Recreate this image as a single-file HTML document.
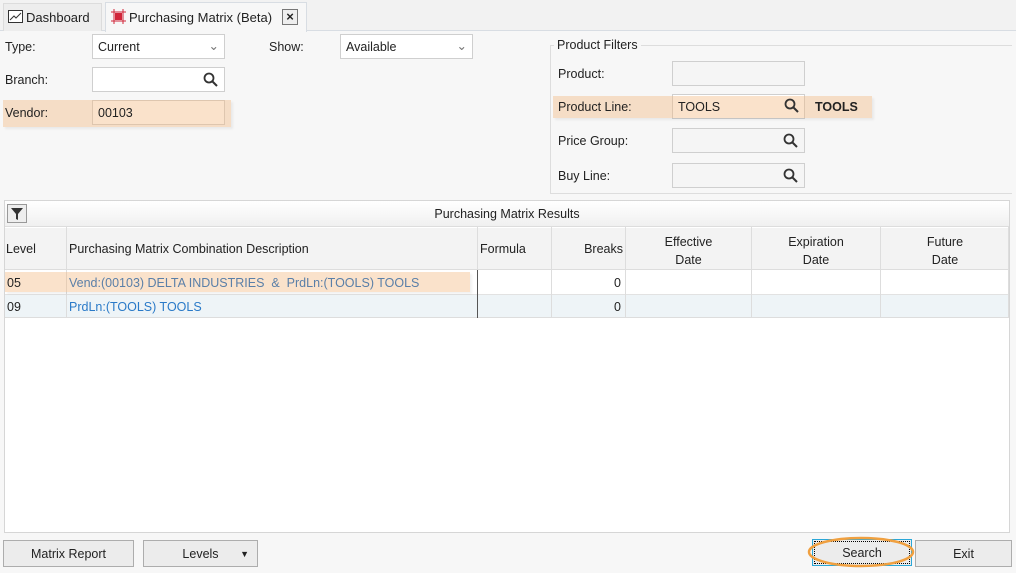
<!DOCTYPE html>
<html><head><style>
*{box-sizing:border-box;margin:0;padding:0}
body{width:1016px;height:573px;background:#f7f7f7;font-family:"Liberation Sans",sans-serif;font-size:12.5px;color:#222;position:relative;overflow:hidden}
.a{position:absolute}
.inp{position:absolute;background:#fff;border:1px solid #cfcfcf;height:25px;padding:5px 5px}
.hl{position:absolute;background:rgba(244,185,130,.42);box-shadow:2px 2px 2px rgba(0,0,0,.06)}
.mag{position:absolute;right:6px;top:4px}
.lbl{position:absolute}
.btn{position:absolute;border:1px solid #adadad;background:#ececec;text-align:center;line-height:26px;height:27px}
.col{position:absolute;top:227px;height:91px;border-left:1px solid #ddd}
</style></head><body>
<div class="a" style="left:0;top:0;width:1016px;height:31px;background:#f2f2f2;border-bottom:1px solid #d8dde3"></div>
<div class="a" style="left:3px;top:3px;width:99px;height:28px;background:#ededed;border:1px solid #dcdcdc;border-bottom:none"></div>
<svg class="a" style="left:8px;top:10px" width="15" height="13"><rect x=".5" y=".5" width="14" height="12" fill="#fff" stroke="#333"/><path d="M2 10l4-4 2 2 5-5" stroke="#333" fill="none"/></svg>
<div class="a" style="left:26px;top:10px;font-size:13px">Dashboard</div>
<div class="a" style="left:105px;top:2px;width:202px;height:30px;background:#f7f7f7;border:1px solid #d8dde3;border-bottom:none"></div>
<svg class="a" style="left:111px;top:9px" width="15" height="15"><path d="M3 0v15M12 0v15M0 3h15M0 12h15" stroke="#d0263a"/><rect x="4" y="4" width="7" height="7" fill="#d0263a"/></svg>
<div class="a" style="left:129px;top:10px;font-size:13px">Purchasing Matrix (Beta)</div>
<div class="a" style="left:282px;top:9px;width:16px;height:16px;border:1px solid #777;background:#eee;font-weight:bold;text-align:center;line-height:14px;font-size:13px">×</div>

<div class="lbl" style="left:5px;top:40px">Type:</div>
<div class="inp" style="left:92px;top:34px;width:133px">Current<span style="position:absolute;right:5px;top:3px;color:#777">⌄</span></div>
<div class="lbl" style="left:269px;top:40px">Show:</div>
<div class="inp" style="left:340px;top:34px;width:133px">Available<span style="position:absolute;right:5px;top:3px;color:#777">⌄</span></div>
<div class="lbl" style="left:5px;top:73px">Branch:</div>
<div class="inp" style="left:92px;top:67px;width:133px"><svg class="mag" width="15" height="15"><circle cx="6" cy="6" r="4.5" stroke="#333" stroke-width="1.8" fill="none"/><path d="M9.5 9.5l4.5 4.5" stroke="#333" stroke-width="2"/></svg></div>
<div class="inp" style="left:92px;top:100px;width:133px"></div>
<div class="hl" style="left:3px;top:100px;width:228px;height:27px"></div>
<div class="lbl" style="left:5px;top:106px">Vendor:</div>
<div class="lbl" style="left:98px;top:106px">00103</div>

<div class="a" style="left:550px;top:45px;width:462px;height:149px;border:1px solid #ddd;border-right:none"></div>
<div class="a" style="left:554px;top:38px;background:#f7f7f7;padding:0 3px">Product Filters</div>
<div class="lbl" style="left:558px;top:67px">Product:</div>
<div class="inp" style="left:672px;top:61px;width:133px;background:#f5f5f5"></div>
<div class="inp" style="left:672px;top:94px;width:133px"></div>
<div class="hl" style="left:553px;top:96px;width:319px;height:22px"></div>
<svg class="a" style="left:784px;top:98px" width="15" height="15"><circle cx="6" cy="6" r="4.5" stroke="#333" stroke-width="1.8" fill="none"/><path d="M9.5 9.5l4.5 4.5" stroke="#333" stroke-width="2"/></svg>
<div class="a" style="left:678px;top:100px">TOOLS</div>
<div class="a" style="left:815px;top:100px;font-weight:bold">TOOLS</div>
<div class="lbl" style="left:558px;top:100px">Product Line:</div>
<div class="lbl" style="left:558px;top:134px">Price Group:</div>
<div class="inp" style="left:672px;top:128px;width:133px;background:#f5f5f5"><svg class="mag" width="15" height="15"><circle cx="6" cy="6" r="4.5" stroke="#333" stroke-width="1.8" fill="none"/><path d="M9.5 9.5l4.5 4.5" stroke="#333" stroke-width="2"/></svg></div>
<div class="lbl" style="left:558px;top:169px">Buy Line:</div>
<div class="inp" style="left:672px;top:163px;width:133px;background:#f5f5f5"><svg class="mag" width="15" height="15"><circle cx="6" cy="6" r="4.5" stroke="#333" stroke-width="1.8" fill="none"/><path d="M9.5 9.5l4.5 4.5" stroke="#333" stroke-width="2"/></svg></div>

<div class="a" style="left:4px;top:200px;width:1006px;height:333px;background:#fff;border:1px solid #d6d6d6"></div>
<div class="a" style="left:5px;top:201px;width:1004px;height:26px;background:linear-gradient(#fff,#f0f0f0);border-bottom:1px solid #ddd;text-align:center;line-height:26px">Purchasing Matrix Results</div>
<div class="a" style="left:7px;top:204px;width:20px;height:19px;border:1px solid #999;background:#eee"><svg width="18" height="17"><path d="M3 3h12l-5 6v6l-2-1v-5z" fill="#333"/></svg></div>
<div class="a" style="left:5px;top:228px;width:1004px;height:42px;background:#f3f3f3;border-bottom:1px solid #ddd"></div>
<div class="a" style="left:5px;top:294px;width:1004px;height:24px;background:#eef4f7;border-top:1px solid #e2e2e2;border-bottom:1px solid #ddd"></div>
<div class="col" style="left:66px"></div><div class="col" style="left:477px;border-color:#555;top:270px;height:48px"></div><div class="col" style="left:477px;height:43px"></div>
<div class="col" style="left:551px"></div><div class="col" style="left:625px"></div><div class="col" style="left:751px"></div><div class="col" style="left:880px"></div><div class="col" style="left:1008px"></div>
<div class="a" style="left:6px;top:242px">Level</div>
<div class="a" style="left:69px;top:242px">Purchasing Matrix Combination Description</div>
<div class="a" style="left:480px;top:242px">Formula</div>
<div class="a" style="left:551px;top:242px;width:72px;text-align:right">Breaks</div>
<div class="a" style="left:626px;top:233px;width:125px;text-align:center;line-height:18px">Effective<br>Date</div>
<div class="a" style="left:752px;top:233px;width:128px;text-align:center;line-height:18px">Expiration<br>Date</div>
<div class="a" style="left:881px;top:233px;width:128px;text-align:center;line-height:18px">Future<br>Date</div>
<div class="hl" style="left:5px;top:272px;width:465px;height:20px"></div>
<div class="a" style="left:7px;top:276px">05</div>
<div class="a" style="left:69px;top:276px;color:#5a7fa8">Vend:(00103) DELTA INDUSTRIES &nbsp;&amp; &nbsp;PrdLn:(TOOLS) TOOLS</div>
<div class="a" style="left:551px;top:276px;width:70px;text-align:right">0</div>
<div class="a" style="left:7px;top:300px">09</div>
<div class="a" style="left:69px;top:300px;color:#2a7ac8">PrdLn:(TOOLS) TOOLS</div>
<div class="a" style="left:551px;top:300px;width:70px;text-align:right">0</div>

<div class="btn" style="left:3px;top:540px;width:131px">Matrix Report</div>
<div class="btn" style="left:143px;top:540px;width:115px">Levels<span style="position:absolute;right:8px;font-size:9px">▼</span></div>
<div class="btn" style="left:812px;top:539px;width:100px;border:1px solid #2aa7d8;outline:1px dotted #000;outline-offset:-3px">Search</div>
<svg class="a" style="left:805px;top:530px" width="112" height="40"><ellipse cx="56" cy="22" rx="52" ry="14" fill="none" stroke="#f0a040" stroke-width="2.5"/></svg>
<div class="btn" style="left:915px;top:540px;width:97px">Exit</div>
</body></html>
